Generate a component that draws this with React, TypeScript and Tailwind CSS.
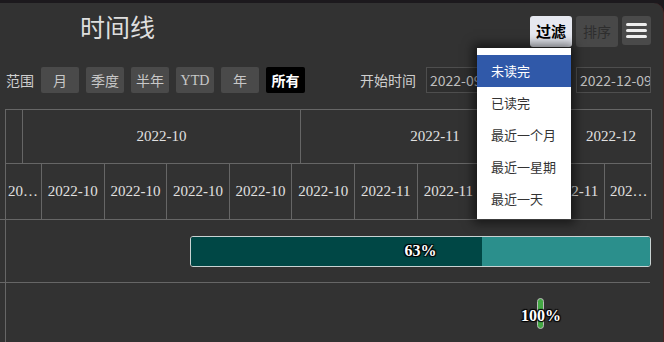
import React from "react";

const cjk = { fontFamily: '"Noto Sans CJK SC", "Noto Sans", sans-serif' };
const serif = { fontFamily: '"Liberation Serif", "Noto Sans CJK SC", serif' };
const shadow = "1px 1px 1px #000, -1px -1px 1px #000, 1px -1px 1px #000, -1px 1px 1px #000";

export default function App() {
  const ranges = ["月", "季度", "半年", "YTD", "年"];
  const row2 = ["20…", "2022-10", "2022-10", "2022-10", "2022-10", "2022-10", "2022-11", "2022-11", "2022-11", "2022-11", "202…"];
  const menu = ["未读完", "已读完", "最近一个月", "最近一星期", "最近一天"];
  return (
    <div className="w-[664px] h-[342px] bg-[#1c191d] overflow-hidden relative" style={cjk}>
      <div className="mt-[3px] h-[339px] bg-[#323232] rounded-tr-[10px] border-r border-[#4a2424] relative">
        {/* header */}
        <div className="flex items-start h-[64px]">
          <div className="ml-[80px] mt-[7px] text-[25px] leading-[32px] text-[#dedede]">时间线</div>
          <div className="ml-auto mr-[12px] mt-[13px] flex gap-[4px]">
            <div className="w-[42px] h-[31px] rounded-[3px] bg-[#e6e8f0] flex items-center justify-center text-[15px] font-bold text-black">过滤</div>
            <div className="w-[42px] h-[31px] rounded-[3px] bg-[#484848] flex items-center justify-center text-[14px] text-[#2e2e2e]">排序</div>
            <div className="w-[29px] h-[29px] rounded-[3px] bg-[#4a4a4a] flex flex-col items-center justify-center gap-[3px]">
              <div className="w-[21px] h-[3px] rounded-full bg-[#eeeeee]" />
              <div className="w-[21px] h-[3px] rounded-full bg-[#eeeeee]" />
              <div className="w-[21px] h-[3px] rounded-full bg-[#eeeeee]" />
            </div>
          </div>
        </div>
        {/* range row */}
        <div className="flex items-center h-[26px] ml-[6px]">
          <span className="text-[14px] text-[#cfcfcf] mr-[7px]">范围</span>
          <div className="flex gap-[7px]">
            {ranges.map((r) => (
              <div
                key={r}
                className="w-[38px] h-[26px] rounded-[2px] bg-[#4a4a4a] flex items-center justify-center text-[14px] text-[#c8c8c8]"
                style={r === "YTD" ? serif : undefined}
              >
                {r}
              </div>
            ))}
            <div className="w-[39px] h-[26px] rounded-[2px] bg-black flex items-center justify-center text-[14px] font-bold text-white">所有</div>
          </div>
          <span className="ml-[55px] text-[14px] text-[#cfcfcf]">开始时间</span>
          <div className="ml-[10px] w-[53px] h-[26px] border border-[#4e4e4e] bg-[#2e2e2e] flex items-center pl-[3px] text-[14px] text-[#bdbdbd] overflow-hidden whitespace-nowrap">2022-09-09</div>
          <div className="ml-[97px] w-[75px] h-[26px] border border-[#4e4e4e] bg-[#2e2e2e] flex items-center pl-[3px] text-[14px] text-[#bdbdbd] overflow-hidden whitespace-nowrap">2022-12-09</div>
        </div>
        {/* table */}
        <div className="mt-[16px] relative">
          <div className="absolute left-[5px] top-0 w-[1px] h-[240px] bg-[#666]" />
          <div className="ml-[5px] w-[647px] border-t border-r border-[#666] overflow-hidden" style={serif}>
            <div className="flex h-[54px] border-b border-[#666] text-[15px] text-[#e0e0e0]">
              <div className="w-[18px] shrink-0 border-r border-[#666]" />
              <div className="w-[278px] shrink-0 border-r border-[#666] flex items-center justify-center">2022-10</div>
              <div className="w-[269px] shrink-0 border-r border-[#666] flex items-center justify-center">2022-11</div>
              <div className="w-[82px] shrink-0 flex items-center justify-center">2022-12</div>
            </div>
            <div className="flex h-[55px] text-[15px] text-[#e0e0e0] whitespace-nowrap">
              {row2.map((t, i) => (
                <div
                  key={i}
                  className={`${i === 0 ? "w-[37px]" : i === 10 ? "w-[47px]" : "w-[62.6px]"} shrink-0 ${i === 10 ? "" : "border-r"} border-[#666] flex items-center justify-center overflow-hidden`}
                >
                  {t}
                </div>
              ))}
            </div>
          </div>
          <div className="w-[650px] h-[1px] bg-[#666]" />
          <div className="h-[62px] flex items-center">
            <div className="ml-[190px] w-[461px] h-[31px] rounded-[3px] border border-[#c9d3d3] overflow-hidden flex relative">
              <div className="w-[291px] bg-[#004745]" />
              <div className="flex-1 bg-[#2b8f8c]" />
              <div
                className="absolute inset-0 flex items-center justify-center text-[16px] font-bold text-white"
                style={{ ...serif, textShadow: shadow }}
              >
                63%
              </div>
            </div>
          </div>
          <div className="w-[650px] h-[1px] bg-[#666]" />
          <div className="h-[60px] relative">
            <div className="absolute left-[537px] top-[15px] w-[7px] h-[31px] rounded-full bg-[#43a843] border border-[#bbb]" />
            <div
              className="absolute left-[518px] top-[21px] w-[46px] text-center text-[16px] font-bold text-white"
              style={{ ...serif, textShadow: shadow }}
            >
              100%
            </div>
          </div>
        </div>
        {/* dropdown */}
        <div className="absolute left-[477px] top-[45px] w-[94px] h-[171px] bg-white shadow-[0_0_10px_4px_rgba(0,0,0,0.55)] pt-[7px] text-[13px]" style={cjk}>
          {menu.map((m, i) => (
            <div
              key={m}
              className={`h-[32px] flex items-center pl-[14px] ${i === 0 ? "bg-[#3059a9] text-white" : "text-[#333]"}`}
            >
              {m}
            </div>
          ))}
        </div>
      </div>
    </div>
  );
}
